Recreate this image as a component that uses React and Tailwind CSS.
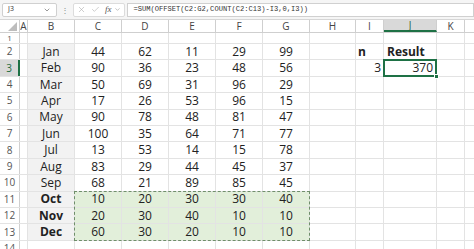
import { X, Check, ChevronDown } from "lucide-react";

const cols = [
  { key: "A", w: "w-[8px]" },
  { key: "B", w: "w-[47px]" },
  { key: "C", w: "w-[47px]" },
  { key: "D", w: "w-[47px]" },
  { key: "E", w: "w-[47px]" },
  { key: "F", w: "w-[47px]" },
  { key: "G", w: "w-[47px]" },
  { key: "H", w: "w-[46px]" },
  { key: "I", w: "w-[28px]" },
  { key: "J", w: "w-[53px]" },
  { key: "K", w: "w-[28px]" },
  { key: "L", w: "w-[30px]" },
];

const data = [
  ["Jan", 44, 62, 11, 29, 99],
  ["Feb", 90, 36, 23, 48, 56],
  ["Mar", 50, 69, 31, 96, 29],
  ["Apr", 17, 26, 53, 96, 15],
  ["May", 90, 78, 48, 81, 47],
  ["Jun", 100, 35, 64, 71, 77],
  ["Jul", 13, 53, 14, 15, 78],
  ["Aug", 83, 29, 44, 45, 37],
  ["Sep", 68, 21, 89, 85, 45],
  ["Oct", 10, 20, 30, 30, 40],
  ["Nov", 20, 30, 40, 10, 10],
  ["Dec", 60, 30, 20, 10, 10],
];

function Cell({ w, className = "", children }) {
  return (
    <div
      className={`${w} shrink-0 h-full border-r border-[#e3e3e3] flex items-center ${className}`}
    >
      {children}
    </div>
  );
}

function RowHead({ n, active }) {
  return (
    <div
      className={`w-[20px] shrink-0 h-full flex items-center justify-center text-[10px] border-r ${
        active
          ? "bg-[#d9d9d9] text-[#1e6b3e] border-r-2 border-[#1e7145]"
          : "text-[#555] border-[#cfcfcf]"
      }`}
    >
      {n}
    </div>
  );
}

export default function App() {
  return (
    <div className="w-[474px] h-[249px] overflow-hidden bg-white font-['Open_Sans',sans-serif] text-[#222] relative">
      {/* Formula bar */}
      <div className="h-[20px] flex items-center bg-[#f5f5f5] border-b border-[#d6d6d6] pl-[2px]">
        <div className="w-[55px] h-[14px] bg-white border border-[#d0d0d0] rounded-[2px] flex items-center justify-between px-[5px]">
          <span className="text-[7px] text-[#333]">J3</span>
          <ChevronDown size={8} strokeWidth={2} className="text-[#666]" />
        </div>
        <span className="w-[16px] text-center text-[8px] text-[#888] leading-none">⋮</span>
        <div className="h-[14px] flex items-center gap-[5px] pl-[3px] pr-[3px] border border-[#dcdcdc] bg-white rounded-[2px]">
          <X size={9} strokeWidth={1.5} className="text-[#aaa]" />
          <Check size={9} strokeWidth={1.5} className="text-[#aaa]" />
          <span className="font-['Liberation_Serif',serif] italic text-[9px] text-[#555] leading-none">fx</span>
          <ChevronDown size={7} strokeWidth={2} className="text-[#999] -ml-[3px]" />
        </div>
        <div className="flex-1 h-[14px] ml-[2px] bg-white border border-[#d0d0d0] flex items-center pl-[6px]">
          <span className="font-['Liberation_Mono',monospace] text-[7.1px] text-[#333] whitespace-nowrap">
            =SUM(OFFSET(C2:G2,COUNT(C2:C13)-I3,0,I3))
          </span>
        </div>
      </div>

      {/* Column headers */}
      <div className="h-[13px] flex border-b border-[#cfcfcf] text-[10px] text-[#444]">
        <div className="w-[20px] shrink-0 h-full border-r border-[#cfcfcf] relative">
          <div className="absolute right-[2px] bottom-[1px] w-0 h-0 border-l-[9px] border-l-transparent border-b-[9px] border-b-[#bdbdbd]" />
        </div>
        {cols.map((c) => (
          <div
            key={c.key}
            className={`${c.w} shrink-0 h-full flex items-center justify-center border-r ${
              c.key === "J"
                ? "bg-[#d9d9d9] text-[#1e6b3e] border-b-2 border-b-[#1e7145] border-r-[#cfcfcf]"
                : "border-[#cfcfcf]"
            }`}
          >
            {c.key}
          </div>
        ))}
      </div>

      {/* Row 1 (partially scrolled) */}
      <div className="h-[11px] flex border-b border-[#e3e3e3]">
        <div className="w-[20px] shrink-0 h-full flex items-center justify-center text-[8px] leading-[10px] text-[#555] border-r border-[#cfcfcf] overflow-hidden">
          1
        </div>
        {cols.map((c) => (
          <Cell key={c.key} w={c.w} />
        ))}
      </div>

      {/* Data rows */}
      {data.map((row, i) => {
        const r = i + 2;
        const bold = r >= 11;
        const green = r >= 11;
        return (
          <div key={r} className="h-[16.42px] flex border-b border-[#e3e3e3] text-[12px]">
            <RowHead n={r} active={r === 3} />
            <Cell w="w-[8px]" />
            <Cell w="w-[47px]" className={`bg-[#f2f2f2] justify-center ${bold ? "font-bold" : ""}`}>
              {row[0]}
            </Cell>
            {row.slice(1).map((v, j) => (
              <Cell
                key={j}
                w="w-[47px]"
                className={`justify-center ${green ? "bg-[#e2efda] border-[#d3e3c9]" : ""}`}
              >
                {v}
              </Cell>
            ))}
            <Cell w="w-[46px]" />
            <Cell w="w-[28px]" className={r === 3 ? "justify-end pr-[2px]" : "pl-[2px] font-bold"}>
              {r === 2 ? "n" : r === 3 ? "3" : ""}
            </Cell>
            <Cell w="w-[53px]" className={r === 3 ? "justify-end pr-[3px] relative" : "pl-[3px] font-bold"}>
              {r === 2 ? "Result" : r === 3 ? "370" : ""}
              {r === 3 && (
                <>
                  <div className="absolute -left-px -top-px -right-px -bottom-px border-2 border-[#1e7145]" />
                  <div className="absolute -right-[3px] -bottom-[3px] w-[5px] h-[5px] bg-[#1e7145] border border-white" />
                </>
              )}
            </Cell>
            <Cell w="w-[28px]" />
            <Cell w="w-[30px]" />
          </div>
        );
      })}

      {/* Row 14 */}
      <div className="h-[16px] flex">
        <RowHead n={14} />
        {cols.map((c) => (
          <Cell key={c.key} w={c.w} />
        ))}
      </div>

      {/* Copy marquee around C11:G13 */}
      <div className="absolute left-[74px] top-[191px] w-[236px] h-[50px] border border-dashed border-[#6f8f6a] pointer-events-none" />
    </div>
  );
}
